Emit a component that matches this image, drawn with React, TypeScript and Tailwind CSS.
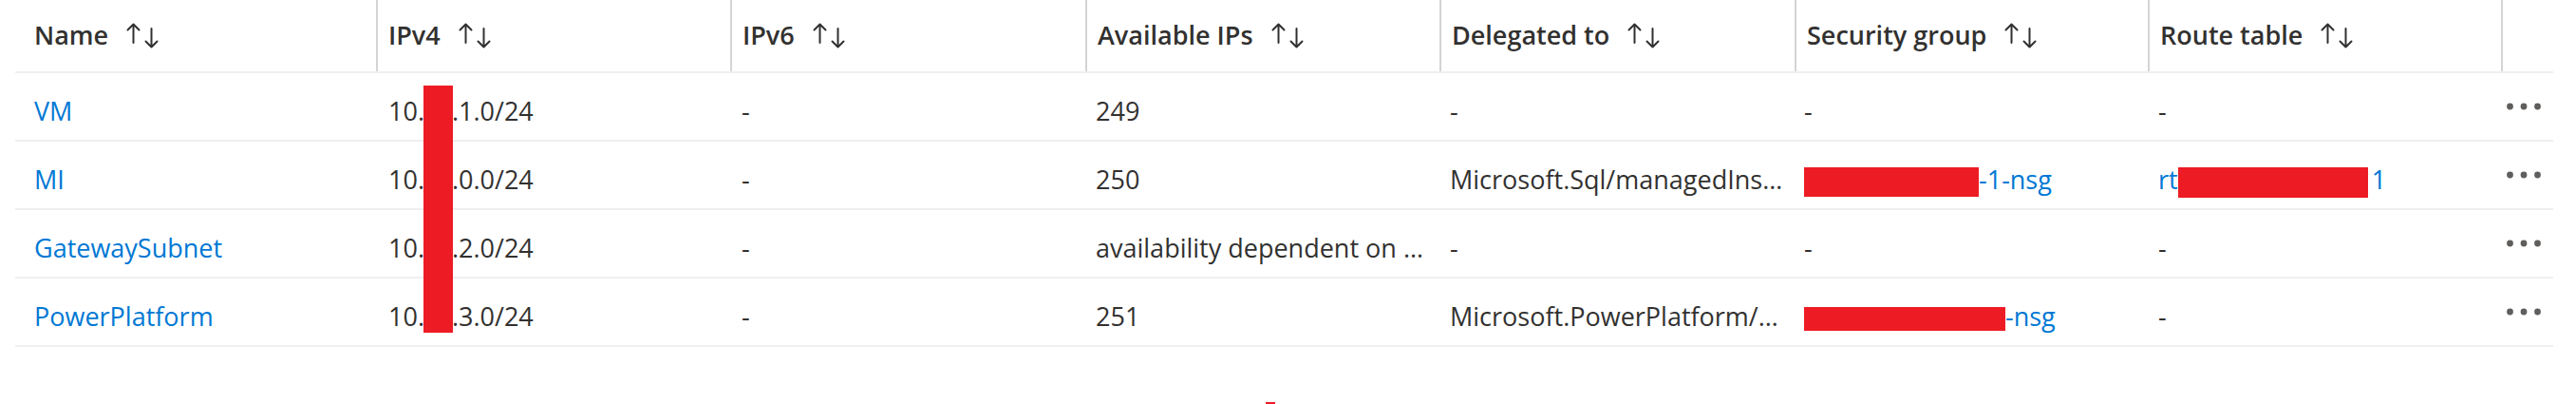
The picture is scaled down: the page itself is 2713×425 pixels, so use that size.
import type { ReactNode } from 'react';

type Row = {
  name: string;
  ipv4: [string, string];
  ipv6: string;
  available: string;
  delegated: string;
  security: ReactNode;
  route: ReactNode;
};

const cols = ['Name', 'IPv4', 'IPv6', 'Available IPs', 'Delegated to', 'Security group', 'Route table'];

const Redact = ({ w, h }: { w: string; h: string }) => (
  <span className={`inline-block align-middle bg-[#ed1c24] ${w} ${h}`} />
);

const rows: Row[] = [
  { name: 'VM', ipv4: ['10.', '.1.0/24'], ipv6: '-', available: '249', delegated: '-', security: '-', route: '-' },
  {
    name: 'MI',
    ipv4: ['10.', '.0.0/24'],
    ipv6: '-',
    available: '250',
    delegated: 'Microsoft.Sql/managedInstances',
    security: (
      <span className="text-[#0078d4]">
        <Redact w="w-[184px]" h="h-[31px]" />-1-nsg
      </span>
    ),
    route: (
      <span className="text-[#0078d4]">
        rt<Redact w="w-[200px]" h="h-[32px]" />
        <span className="ml-[4px]">1</span>
      </span>
    ),
  },
  {
    name: 'GatewaySubnet',
    ipv4: ['10.', '.2.0/24'],
    ipv6: '-',
    available: 'availability dependent on delegation',
    delegated: '-',
    security: '-',
    route: '-',
  },
  {
    name: 'PowerPlatform',
    ipv4: ['10.', '.3.0/24'],
    ipv6: '-',
    available: '251',
    delegated: 'Microsoft.PowerPlatform/enterprisePolicies',
    security: (
      <span className="text-[#0078d4]">
        <Redact w="w-[212px]" h="h-[25px]" />-nsg
      </span>
    ),
    route: '-',
  },
];

const grid = 'grid grid-cols-[380px_373px_374px_373px_374px_372px_372px_55px]';

const SortIcon = () => (
  <svg width="35" height="27" viewBox="0 0 35 27" fill="none" stroke="#323130" strokeWidth="2" strokeLinecap="round" strokeLinejoin="round" className="ml-[19px] shrink-0">
    <path d="M7.5 21V1.5M1.5 7.5L7.5 1.5L13.5 7.5" />
    <path d="M26.5 6V25.5M20.5 19.5L26.5 25.5L32.5 19.5" />
  </svg>
);

const MoreIcon = () => (
  <svg width="36" height="8" viewBox="0 0 36 8" fill="#605e5c">
    <circle cx="3.5" cy="4" r="3.4" />
    <circle cx="18" cy="4" r="3.4" />
    <circle cx="32.5" cy="4" r="3.4" />
  </svg>
);

export default function App() {
  return (
    <div className="relative w-[2713px] h-[425px] bg-white text-[27px] text-[#323130] font-['Segoe_UI','Open_Sans','Liberation_Sans',sans-serif]">
      <div className="ml-4 w-[2673px]">
        {/* Header */}
        <div className={`${grid} h-[77px] border-b-2 border-[#efefef]`}>
          {cols.map((c, i) => (
            <div
              key={c}
              className={`flex items-center font-semibold ${i === 0 ? 'pl-[20px]' : 'pl-[11px] border-l-2 border-[#d4d4d4]'}`}
            >
              <span className="whitespace-nowrap">{c}</span>
              <SortIcon />
            </div>
          ))}
          <div className="border-l-2 border-[#d4d4d4]" />
        </div>

        {/* Rows */}
        {rows.map((r) => (
          <div key={r.name} className={`${grid} h-[72px] border-b-2 border-[#efefef]`}>
            <div className="flex items-center pl-[20px] pt-[10px]">
              <span className="text-[#0078d4]">{r.name}</span>
            </div>
            <div className="flex items-center pl-[13px] pt-[10px] whitespace-nowrap">
              {r.ipv4[0]}
              <span className="inline-block w-[29px]" />
              {r.ipv4[1]}
            </div>
            <div className="flex items-center pl-[12px] pt-[10px]">{r.ipv6}</div>
            <div className="flex items-center pl-[11px] pr-[10px] pt-[10px] min-w-0">
              <span className="truncate">{r.available}</span>
            </div>
            <div className="flex items-center pl-[11px] pr-[10px] pt-[10px] min-w-0">
              <span className="truncate">{r.delegated}</span>
            </div>
            <div className="flex items-center pl-[10px] pt-[10px] whitespace-nowrap">{r.security}</div>
            <div className="flex items-center pl-[11px] pt-[10px] whitespace-nowrap">{r.route}</div>
            <div className="flex items-center pl-[6px]">
              <MoreIcon />
            </div>
          </div>
        ))}
      </div>

      {/* redaction bar over IPv4 column */}
      <div className="absolute left-[446px] top-[90px] w-[31px] h-[260px] bg-[#ed1c24]" />
      <div className="absolute left-[1333px] top-[423px] w-[10px] h-[2px] bg-[#ed1c24]" />
    </div>
  );
}
